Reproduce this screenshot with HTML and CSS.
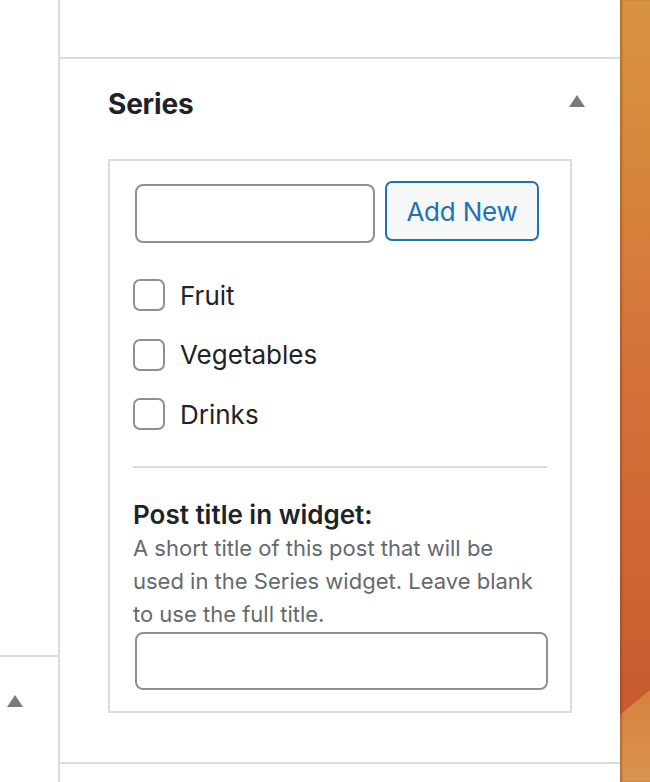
FILE: index.html
```html
<!DOCTYPE html>
<html lang="en">
<head>
<meta charset="utf-8">
<title>Series</title>
<link rel="stylesheet" href="styles.css">
</head>
<body>
<div class="page">
  <aside class="side">
    <div class="side-top"></div>
    <div class="side-bottom">
      <svg class="tri" width="16" height="12" viewBox="0 0 16 12" aria-hidden="true"><polygon points="8,0 16,12 0,12" fill="#787c82"/></svg>
    </div>
  </aside>
  <main class="main">
    <div class="main-top"></div>
    <section class="postbox">
      <div class="postbox-header">
        <h2 class="postbox-title">Series</h2>
        <span class="toggle"><svg width="16" height="12" viewBox="0 0 16 12" aria-hidden="true"><polygon points="8,0 16,12 0,12" fill="#787c82"/></svg></span>
      </div>
      <div class="inside">
        <div class="add-row">
          <input class="field field-new" type="text" aria-label="New series">
          <button class="btn" type="button">Add New</button>
        </div>
        <ul class="checklist">
          <li class="check-item"><input class="check" type="checkbox" id="c1"><label for="c1">Fruit</label></li>
          <li class="check-item"><input class="check" type="checkbox" id="c2"><label for="c2">Vegetables</label></li>
          <li class="check-item"><input class="check" type="checkbox" id="c3"><label for="c3">Drinks</label></li>
        </ul>
        <hr class="sep">
        <label class="title-label" for="ptitle">Post title in widget:</label>
        <p class="desc">A short title of this post that will be used in the Series widget. Leave blank to use the full title.</p>
        <input class="field field-title" type="text" id="ptitle">
      </div>
    </section>
    <div class="main-bottom"></div>
  </main>
  <div class="edge">
    <div class="edge-fill"></div>
    <div class="edge-cut"></div>
  </div>
</div>
</body>
</html>
```

FILE: styles.css
```css
* { box-sizing: border-box; }

html, body {
  margin: 0;
  padding: 0;
  background: #fff;
}

body {
  font-family: Inter, "Noto Sans", "DejaVu Sans", sans-serif;
  color: #1d2327;
}

.page {
  display: flex;
  width: 650px;
  height: 782px;
  overflow: hidden;
}

/* left column */
.side {
  width: 60px;
  flex: none;
  border-right: 2px solid #dcdcde;
  display: flex;
  flex-direction: column;
}
.side-top {
  height: 657px;
  border-bottom: 2px solid #dcdcde;
}
.side-bottom {
  padding: 38px 0 0 7px;
}
.tri { display: block; }

/* main column */
.main {
  width: 560px;
  flex: none;
  display: flex;
  flex-direction: column;
}
.main-top {
  height: 59px;
  border-bottom: 2px solid #dcdcde;
  flex: none;
}

.postbox-header {
  display: flex;
  align-items: flex-start;
  justify-content: space-between;
  padding: 31px 35px 0 48px;
}
.postbox-title {
  margin: 0;
  font-size: 28px;
  line-height: 28px;
  font-weight: 650;
  letter-spacing: -0.2px;
}
.toggle {
  display: block;
  margin-top: 5px;
}
.toggle svg { display: block; }

.inside {
  margin: 41px 48px 0 48px;
  border: 2px solid #dcdcde;
  padding: 20px 23px 21px 23px;
}

.add-row {
  display: flex;
  align-items: flex-start;
  gap: 10px;
}

.field {
  display: block;
  border: 2px solid #8c8f94;
  border-radius: 8px;
  background: #fff;
  font: inherit;
  margin: 0;
  padding: 0 16px;
}
.field-new {
  width: 240px;
  height: 59px;
  margin: 3px 0 0 2px;
}
.btn {
  width: 154px;
  height: 60px;
  border: 2px solid #2271b1;
  border-radius: 7px;
  background: #f6f7f7;
  color: #2271b1;
  font-family: inherit;
  font-size: 26px;
  letter-spacing: -0.2px;
  padding: 0;
  margin: 0;
}

.checklist {
  list-style: none;
  margin: 36px 0 0 0;
  padding: 0;
  display: flex;
  flex-direction: column;
  gap: 27.5px;
}
.check-item {
  display: flex;
  align-items: center;
  gap: 15px;
  height: 32px;
  font-size: 26px;
}
.check {
  appearance: none;
  -webkit-appearance: none;
  width: 32px;
  height: 32px;
  margin: 0;
  border: 2px solid #8c8f94;
  border-radius: 7px;
  background: #fff;
  flex: none;
}

.sep {
  margin: 36px 0 0 0;
  border: 0;
  border-top: 2px solid #dcdcde;
  height: 0;
}

.title-label {
  display: block;
  margin-top: 34.5px;
  margin-bottom: 5px;
  font-size: 26px;
  line-height: 24px;
  font-weight: 600;
}
.desc {
  margin: 0;
  font-size: 22px;
  line-height: 33px;
  color: #646970;
}
.field-title {
  width: 413px;
  height: 58px;
  margin: 1.5px 0 0 2px;
}

.main-bottom {
  margin-top: 49px;
  border-top: 2px solid #dcdcde;
  flex: 1;
}

/* right decorative edge */
.edge {
  width: 30px;
  flex: none;
  display: flex;
  flex-direction: column;
  background: linear-gradient(180deg, #d9943f 0%, #d6833c 25%, #d4733a 45%, #cf6634 70%, #c85b2f 90%);
  box-shadow: inset 2px 0 2px rgba(110, 50, 10, 0.35);
}
.edge-fill {
  flex: 1;
}
.edge-cut {
  height: 92px;
  background: linear-gradient(180deg, #d6813f 0%, #d88d47 60%, #d99450 100%);
  clip-path: polygon(0 25px, 100% 0, 100% 100%, 0 100%);
  box-shadow: inset 2px 0 2px rgba(110, 50, 10, 0.35);
}
```
